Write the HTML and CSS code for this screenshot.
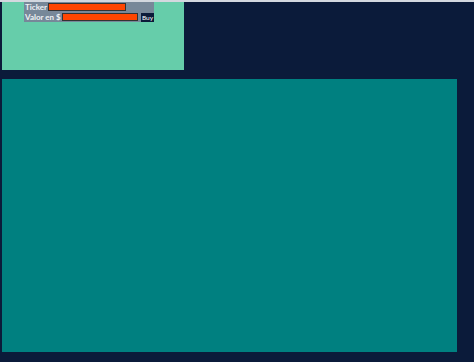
FILE: index.html
```html
<!DOCTYPE html>
<html lang="es">
    <head>
        <meta charset="UTF-8">
        <title>broker</title>
        <link rel="stylesheet" href="styles.css">
    </head>
    <body>
        <div class="top">
            <div class="panel">
                <form class="orden">
                    <div class="fila">
                        <label for="ticker" class="et-ticker">Ticker</label>
                        <input type="text" id="ticker" class="campo campo-ticker">
                    </div>
                    <div class="fila">
                        <label for="valor" class="et-valor">Valor en $</label>
                        <input type="text" id="valor" class="campo campo-valor">
                        <button type="button" class="buy">Buy</button>
                    </div>
                </form>
            </div>
        </div>
        <div class="main"></div>
    </body>
</html>
```

FILE: styles.css
```css
html{background-color:#0b1b3a;}
body{margin:0;background-color:#0b1b3a;border-top:2px solid #d3d8df;font-family:Lato,sans-serif;font-size:8px;color:#eef1f4;}
.top{padding-left:2px;}
/* panel verde */
.panel{width:182px;height:68px;background-color:#66cdaa;}
.orden{margin:0 0 0 22px;width:130px;background-color:#778899;overflow:hidden;}
.fila{display:flex;align-items:center;height:10px;padding-left:1px;white-space:nowrap;}
.fila label{flex-shrink:0;line-height:10px;font-weight:bold;}
.et-ticker{width:23px;}
.et-valor{width:37px;}
.campo{flex-shrink:0;box-sizing:border-box;height:8px;padding:0;margin:0;border:1px solid #333;background-color:#ff4500;}
.campo-ticker{width:78px;}
.campo-valor{width:76px;}
.buy{flex-shrink:0;box-sizing:border-box;width:13px;margin-left:3px;padding:0;height:9px;border:none;background-color:#0b1b3a;color:white;font-family:Lato,sans-serif;font-size:6.5px;line-height:9px;text-align:center;}
/* panel principal */
.main{margin:9px 17px 0 2px;height:273px;background-color:#008080;}
```
